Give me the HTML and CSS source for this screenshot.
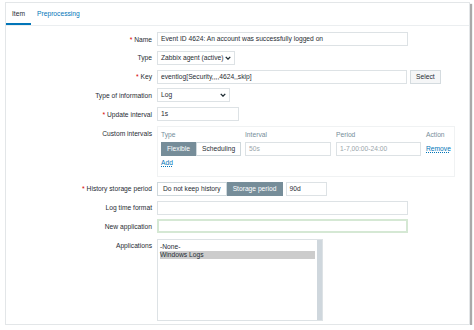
FILE: index.html
```html
<!DOCTYPE html>
<html lang="en">
<head>
    <meta charset="UTF-8">
    <title>Item</title>
    <link rel="stylesheet" href="styles.css">
</head>
<body>
    <div class="panel">
        <div class="tabs">
            <span class="tab active">Item</span>
            <span class="tab">Preprocessing</span>
        </div>

        <div class="form">
            <div class="row">
                <div class="label req">Name</div>
                <div class="field"><div class="input w-name">Event ID 4624: An account was successfully logged on</div></div>
            </div>
            <div class="row">
                <div class="label">Type</div>
                <div class="field"><div class="input select w-type">Zabbix agent (active)<svg class="chev" viewBox="0 0 8 5"><path d="M1 1l3 3 3-3" /></svg></div></div>
            </div>
            <div class="row">
                <div class="label req">Key</div>
                <div class="field">
                    <div class="input w-key">eventlog[Security,,,,4624,,skip]</div>
                    <div class="btn">Select</div>
                </div>
            </div>
            <div class="row">
                <div class="label">Type of information</div>
                <div class="field"><div class="input select w-info">Log<svg class="chev" viewBox="0 0 8 5"><path d="M1 1l3 3 3-3" /></svg></div></div>
            </div>
            <div class="row">
                <div class="label req">Update interval</div>
                <div class="field"><div class="input w-upd">1s</div></div>
            </div>
            <div class="row row-top">
                <div class="label">Custom intervals</div>
                <div class="field">
                    <div class="intervals">
                        <div class="iv-head">
                            <span class="c-type">Type</span>
                            <span class="c-int">Interval</span>
                            <span class="c-per">Period</span>
                            <span class="c-act">Action</span>
                        </div>
                        <div class="iv-row">
                            <div class="seg c-type">
                                <span class="seg-on">Flexible</span>
                                <span class="seg-off">Scheduling</span>
                            </div>
                            <div class="input ph c-int">50s</div>
                            <div class="input ph c-per">1-7,00:00-24:00</div>
                            <span class="link c-act">Remove</span>
                        </div>
                        <div class="iv-add"><span class="link">Add</span></div>
                    </div>
                </div>
            </div>
            <div class="row">
                <div class="label req">History storage period</div>
                <div class="field">
                    <div class="seg">
                        <span class="seg-off">Do not keep history</span>
                        <span class="seg-on">Storage period</span>
                    </div>
                    <div class="input w-days">90d</div>
                </div>
            </div>
            <div class="row">
                <div class="label">Log time format</div>
                <div class="field"><div class="input w-name"></div></div>
            </div>
            <div class="row">
                <div class="label">New application</div>
                <div class="field"><div class="input w-name focus"></div></div>
            </div>
            <div class="row row-top">
                <div class="label">Applications</div>
                <div class="field">
                    <div class="listbox">
                        <div class="options">
                            <div class="opt">-None-</div>
                            <div class="opt sel">Windows Logs</div>
                        </div>
                        <div class="scroll"></div>
                    </div>
                </div>
            </div>
        </div>
    </div>
</body>
</html>
```

FILE: styles.css
```css
body {
    margin: 0;
    background-color: white;
    font-family: "Liberation Sans", Arial, sans-serif;
    font-size: 6.7px;
    color: #1f2c33;
}
.panel {
    margin: 2px 0 0 5px;
    width: 465px;
    height: 323px;
    border: 1px solid #e3e6e8;
    box-shadow: 2px 2px 1px #a9a9a9;
    box-sizing: border-box;
}
.tabs {
    display: flex;
    height: 22px;
    border-bottom: 1px solid #ebeef0;
}
.tab {
    padding: 0 6px;
    line-height: 22px;
    color: #0275b8;
}
.tab.active {
    color: #1f2c33;
    border-bottom: 2px solid #0275b8;
    line-height: 21px;
}
.form {
    padding-top: 6px;
}
.row {
    display: grid;
    grid-template-columns: 146px 1fr;
    column-gap: 5px;
    align-items: center;
    margin-bottom: 4.8px;
}
.row-top {
    align-items: start;
}
.label {
    text-align: right;
}
.row-top .label {
    padding-top: 4px;
}
.req::before {
    content: "* ";
    color: #d40000;
}
.field {
    display: flex;
    align-items: center;
    gap: 3px;
}
.input {
    height: 14px;
    line-height: 12px;
    padding: 0 3px;
    border: 1px solid #dde2e5;
    box-sizing: border-box;
    background: white;
    white-space: nowrap;
    overflow: hidden;
    position: relative;
}
.w-name { width: 251px; }
.w-key { width: 250px; }
.w-type { width: 78px; }
.w-info { width: 73px; }
.w-upd { width: 82px; }
.w-days { width: 41px; }
.select {
    padding-right: 10px;
}
.select .chev {
    position: absolute;
    right: 3px;
    top: 4px;
    width: 6px;
    height: 4px;
    fill: none;
    stroke: #1f2c33;
    stroke-width: 1.8;
}
.focus {
    border: 2px solid #d5e8d4;
}
.btn {
    height: 14px;
    line-height: 12px;
    padding: 0 5px;
    border: 1px solid #d4dbdf;
    box-sizing: border-box;
    background: #f5f6f7;
}
.intervals {
    width: 298px;
    padding: 3px 3px 3px;
    border: 1px solid #f0f2f3;
    box-sizing: border-box;
}
.iv-head, .iv-row {
    display: flex;
    align-items: center;
}
.iv-head {
    color: #768d99;
    height: 10px;
    margin-bottom: 2px;
}
.c-type { width: 80px; margin-right: 4px; flex: none; }
.c-int { width: 86px; margin-right: 5px; flex: none; }
.c-per { width: 85px; margin-right: 5px; flex: none; }
.ph { color: #9aa5ab; }
.iv-add {
    margin-top: 3px;
    height: 10px;
    margin-bottom: 4px;
}
.link {
    color: #0275b8;
    text-decoration: underline dotted;
    text-underline-offset: 1px;
}
.seg {
    display: flex;
    height: 14px;
}
.seg span {
    line-height: 12px;
    padding: 0 5px;
    box-sizing: border-box;
    border: 1px solid #cfd8dc;
}
.seg .seg-on {
    background: #768d99;
    border-color: #768d99;
    color: white;
}
.listbox {
    width: 166px;
    height: 82px;
    border: 1px solid #dde2e5;
    box-sizing: border-box;
    display: flex;
    margin-top: 1px;
}
.options {
    flex: 1;
    padding: 3px 2px;
}
.opt {
    line-height: 8px;
}
.opt.sel {
    background: #cccccc;
}
.scroll {
    width: 5px;
    background: #cfd7dd;
}
```
